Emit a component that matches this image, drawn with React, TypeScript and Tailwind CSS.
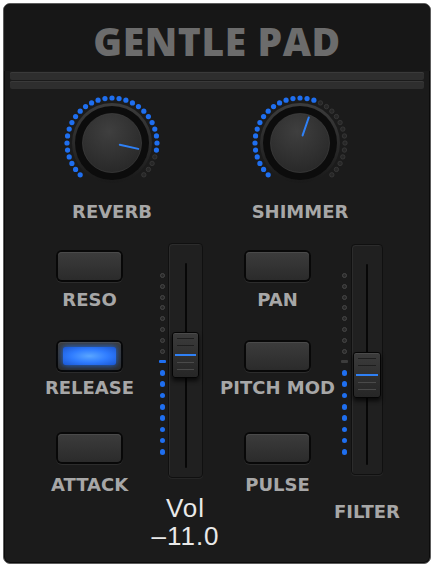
import React from 'react';

const BLUE = '#1f6ff0';

const labelCls =
  "whitespace-nowrap text-[18px] leading-[22px] font-bold text-[#a7a7a7] [font-family:'DejaVu_Sans',sans-serif]";

interface KnobProps {
  id: string;
  value: number;
}

const Knob: React.FC<KnobProps> = ({ id, value }) => {
  const count = 31;
  // dots around the knob, from -135deg to +135deg
  const dots = Array.from({ length: count }, (_, i) => {
    const a = ((-135 + (270 * i) / (count - 1)) * Math.PI) / 180;
    return {
      x: 50 + 45 * Math.sin(a),
      y: 50 - 45 * Math.cos(a),
      lit: i / (count - 1) <= value + 0.001,
    };
  });
  const ang = ((-135 + 270 * value) * Math.PI) / 180;

  return (
    <svg width="100" height="100" viewBox="0 0 100 100">
      <defs>
        <linearGradient id={`${id}-bz`} x1="0" y1="0" x2="0" y2="1">
          <stop offset="0" stopColor="#3c3c3c" />
          <stop offset="1" stopColor="#191919" />
        </linearGradient>
        <radialGradient id={`${id}-kn`} cx="45%" cy="30%" r="75%">
          <stop offset="0" stopColor="#3f3f3f" />
          <stop offset="1" stopColor="#272727" />
        </radialGradient>
      </defs>
      {dots.map((d, i) =>
        d.lit ? (
          <circle key={i} cx={d.x} cy={d.y} r="2.6" fill={BLUE} />
        ) : (
          <circle key={i} cx={d.x} cy={d.y} r="2.2" fill="#272727" stroke="#3e3e3e" strokeWidth="0.7" />
        )
      )}
      <circle cx="50" cy="50" r="40" fill={`url(#${id}-bz)`} />
      <circle cx="50" cy="50" r="37" fill="#0c0c0c" />
      <circle cx="50" cy="50" r="29.5" fill={`url(#${id}-kn)`} stroke="#454545" strokeWidth="0.6" />
      <line
        x1={50 + 8 * Math.sin(ang)}
        y1={50 - 8 * Math.cos(ang)}
        x2={50 + 27 * Math.sin(ang)}
        y2={50 - 27 * Math.cos(ang)}
        stroke="#2f80f5"
        strokeWidth="2"
        strokeLinecap="round"
      />
    </svg>
  );
};

const PadButton: React.FC<{ lit?: boolean }> = ({ lit }) => (
  <div className="h-[32px] w-[67px] rounded-[6px] bg-[#080808] p-[2px] shadow-[0_1px_0_#2c2c2c]">
    <div className="flex h-full w-full rounded-[4px] bg-gradient-to-b from-[#3c3c3c] to-[#2b2b2b] shadow-[inset_0_1px_0_#4a4a4a] p-[5px]">
      {lit && (
        <div className="h-full w-full rounded-[2px] bg-[radial-gradient(ellipse_at_center,#5aa6ff_0%,#2f7cff_50%,#1a56d2_100%)] shadow-[0_0_6px_#1f6ff0]" />
      )}
    </div>
  </div>
);

const Dots: React.FC<{ dashLit: boolean }> = ({ dashLit }) => (
  <div className="flex w-[7px] flex-col items-center gap-[5.8px]">
    {Array.from({ length: 8 }).map((_, i) => (
      <div key={`g${i}`} className="h-[5px] w-[5px] rounded-full border border-[#474747] bg-[#2a2a2a]" />
    ))}
    <div className={`my-[1px] h-[3px] w-[7px] rounded-[1px] ${dashLit ? 'bg-[#1f6ff0]' : 'bg-[#3c3c3c]'}`} />
    {Array.from({ length: 8 }).map((_, i) => (
      <div key={`b${i}`} className="h-[5.5px] w-[5.5px] rounded-full bg-[#1f6ff0]" />
    ))}
  </div>
);

interface FaderProps {
  width: number;
  height: number;
  thumbTop: number;
  inset: number;
}

const Fader: React.FC<FaderProps> = ({ width, height, thumbTop, inset }) => (
  <div
    className="relative rounded-[4px] border border-[#101010] bg-[#202020] shadow-[inset_1px_1px_0_#2c2c2c,0_1px_0_#262626]"
    style={{ width, height }}
  >
    {/* slot */}
    <div className="absolute left-1/2 top-[19px] bottom-[9px] w-[2px] -translate-x-1/2 rounded-full bg-[#070707]" />
    {/* thumb */}
    <div
      className="absolute h-[46px] rounded-[3px] border border-[#050505] bg-gradient-to-b from-[#3b3b3b] to-[#262626] shadow-[0_3px_4px_rgba(0,0,0,0.7),inset_0_1px_0_#4a4a4a]"
      style={{ top: thumbTop, left: inset, right: inset }}
    >
      <div className="flex flex-col items-center pt-[5px]">
        <div className="h-[1px] w-[70%] bg-[#1e1e1e]" />
        <div className="mt-[6px] h-[1px] w-[70%] bg-[#1e1e1e]" />
        <div className="mt-[8px] h-[2px] w-[84%] bg-[#2f80f5]" />
        <div className="mt-[6px] h-[1px] w-[70%] bg-[#4a4a4a]" />
        <div className="mt-[6px] h-[1px] w-[70%] bg-[#4a4a4a]" />
      </div>
    </div>
  </div>
);

const ButtonColumn: React.FC<{ labels: [string, string, string]; litIndex: number }> = ({ labels, litIndex }) => (
  <div className="flex w-[67px] flex-col items-center pt-[7px]">
    <PadButton lit={litIndex === 0} />
    <div className={`mt-[7px] ${labelCls}`}>{labels[0]}</div>
    <div className="mt-[29px]">
      <PadButton lit={litIndex === 1} />
    </div>
    <div className={`mt-[5px] ${labelCls}`}>{labels[1]}</div>
    <div className="mt-[33px]">
      <PadButton lit={litIndex === 2} />
    </div>
    <div className={`mt-[10px] ${labelCls}`}>{labels[2]}</div>
  </div>
);

export default function App() {
  return (
    <div className="h-[568px] w-[434px] bg-white pl-[3px] pt-[3px]">
      <div className="h-[561px] w-[428px] overflow-hidden rounded-[7px] border border-[#5c5c5c] bg-[#1b1b1b] shadow-[inset_0_0_0_1px_#0b0b0b]">
        {/* title */}
        <div className="flex h-[67px] items-center justify-center bg-[#171717] pt-[6px]">
          <div className="text-[39px] font-extrabold leading-none tracking-[0.6px] text-[#6c6c6c] [font-family:'Open_Sans',sans-serif]">
            GENTLE PAD
          </div>
        </div>

        {/* divider */}
        <div className="mx-[6px] flex flex-col gap-[1px] pt-[1px]">
          <div className="h-[8px] rounded-[2px] bg-[#2e2e2e] shadow-[inset_0_1px_0_#3a3a3a]" />
          <div className="h-[8px] rounded-[2px] bg-[#2e2e2e] shadow-[inset_0_1px_0_#3a3a3a]" />
        </div>

        <div className="flex">
          {/* left half */}
          <div className="w-[188px]">
            <div className="ml-[58px] mt-[4px] flex w-[100px] flex-col items-center">
              <Knob id="reverb" value={0.88} />
              <div className={`mt-[8px] ${labelCls}`}>REVERB</div>
            </div>
            <div className="mt-[20px] flex items-start">
              <div className="ml-[52px]">
                <ButtonColumn labels={['RESO', 'RELEASE', 'ATTACK']} litIndex={1} />
              </div>
              <div className="ml-[36px] pt-[30px]">
                <Dots dashLit />
              </div>
              <div className="ml-[2px] flex w-[35px] flex-col items-center">
                <Fader width={35} height={235} thumbTop={88} inset={3} />
                <div className="mt-[16px] whitespace-nowrap text-center text-[26px] leading-[28px] tracking-[1px] text-[#e9e9e9] [font-family:'Liberation_Sans',sans-serif]">
                  <div>Vol</div>
                  <div>–11.0</div>
                </div>
              </div>
            </div>
          </div>

          {/* right half */}
          <div className="flex-1">
            <div className="ml-[58px] mt-[4px] flex w-[100px] flex-col items-center">
              <Knob id="shimmer" value={0.57} />
              <div className={`mt-[8px] ${labelCls}`}>SHIMMER</div>
            </div>
            <div className="mt-[20px] flex items-start">
              <div className="ml-[52px]">
                <ButtonColumn labels={['PAN', 'PITCH MOD', 'PULSE']} litIndex={-1} />
              </div>
              <div className="ml-[30px] pt-[30px]">
                <Dots dashLit={false} />
              </div>
              <div className="ml-[3px] mt-[1px] flex w-[32px] flex-col items-center">
                <Fader width={32} height={231} thumbTop={107} inset={1} />
                <div className={`mt-[26px] ${labelCls}`}>FILTER</div>
              </div>
            </div>
          </div>
        </div>
      </div>
    </div>
  );
}
